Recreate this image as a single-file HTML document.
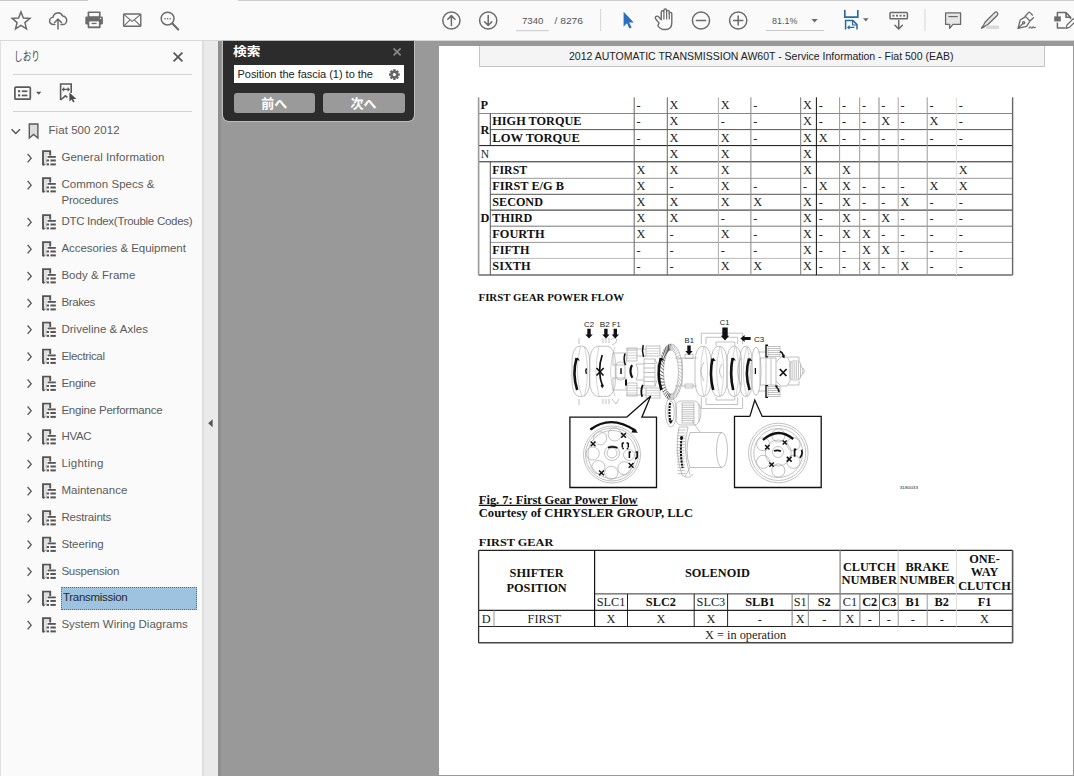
<!DOCTYPE html>
<html lang="ja"><head><meta charset="utf-8"><title>Fiat 500 2012 - AW60T</title>
<style>
html,body{margin:0;padding:0}
body{width:1074px;height:776px;position:relative;overflow:hidden;background:#999;font-family:"Liberation Sans","Noto Sans CJK JP",sans-serif;color:#4b4b4b}
.abs{position:absolute}
#toolbar{left:0;top:0;width:1074px;height:40px;background:#fafafa;border-bottom:1px solid #d8d8d8}
#panel{left:0;top:41px;width:202px;height:735px;background:#fafafa;border-left:1px solid #e0e0e0;box-sizing:border-box}
#strip{left:202px;top:41px;width:16px;height:735px;background:#eaeaea}
#page{left:439px;top:46px;width:634px;height:729px;background:#fff}
.hr{position:absolute;left:12px;width:179px;height:1px;background:#d2d2d2}
.bm{position:absolute;left:60.4px;font-size:11.5px;line-height:16px;color:#5a5a5a;white-space:nowrap}
.tb{position:absolute;font-size:10px;color:#555;white-space:nowrap}
#search{left:223px;top:41px;width:191px;height:80px;background:#2c2c2c;border-radius:0 0 6px 6px;box-shadow:0 0 0 1px #bdbdbd}
.btn{position:absolute;top:52px;height:20px;background:#9a9a9a;border-radius:3px;color:#fff;font-weight:bold;font-size:13px;line-height:21px;text-align:center}
svg{position:absolute;overflow:visible}
svg text{white-space:pre}
.sb{font-family:"Liberation Serif",serif;font-weight:bold;fill:#111}
.sr{font-family:"Liberation Serif",serif;fill:#222}
</style></head><body>
<div id="toolbar" class="abs"></div>
<div class="abs" style="left:0;top:0;width:88px;height:1px;background:#c8c8c8"></div>
<div class="abs" style="left:238px;top:0;width:836px;height:1px;background:#cdcdcd"></div>
<div id="panel" class="abs">
<div class="hr" style="top:33px"></div>
<div class="hr" style="top:70px"></div>
<div class="bm" style="left:47.5px;top:81px;letter-spacing:0.06px">Fiat 500 2012</div>
<div class="bm" style="top:108.0px;letter-spacing:0.07px">General Information</div>
<div class="bm" style="top:135.0px;letter-spacing:0.03px">Common Specs &amp;</div>
<div class="bm" style="top:151.0px;letter-spacing:-0.18px">Procedures</div>
<div class="bm" style="top:172.0px;letter-spacing:-0.28px">DTC Index(Trouble Codes)</div>
<div class="bm" style="top:199.0px;letter-spacing:-0.04px">Accesories &amp; Equipment</div>
<div class="bm" style="top:226.0px;letter-spacing:0.04px">Body &amp; Frame</div>
<div class="bm" style="top:253.0px;letter-spacing:-0.37px">Brakes</div>
<div class="bm" style="top:279.5px;letter-spacing:0.02px">Driveline &amp; Axles</div>
<div class="bm" style="top:306.5px;letter-spacing:-0.34px">Electrical</div>
<div class="bm" style="top:333.5px;letter-spacing:-0.25px">Engine</div>
<div class="bm" style="top:360.5px;letter-spacing:-0.21px">Engine Performance</div>
<div class="bm" style="top:387.0px;letter-spacing:-0.27px">HVAC</div>
<div class="bm" style="top:414.0px;letter-spacing:0.24px">Lighting</div>
<div class="bm" style="top:441.0px;letter-spacing:0.01px">Maintenance</div>
<div class="bm" style="top:468.0px;letter-spacing:-0.20px">Restraints</div>
<div class="bm" style="top:494.5px;letter-spacing:-0.08px">Steering</div>
<div class="bm" style="top:521.5px;letter-spacing:-0.24px">Suspension</div>
<div class="abs" style="left:59.6px;top:546.0px;width:136px;height:23px;background:#9dc3e0;outline:1px dotted #666;outline-offset:-1px"></div>
<div class="bm" style="left:62px;top:547.5px;letter-spacing:-0.29px;color:#2a2a2a">Transmission</div>
<div class="bm" style="top:575.0px;letter-spacing:-0.01px">System Wiring Diagrams</div>
</div>
<div id="strip" class="abs"></div>
<div class="abs" style="left:202px;top:41px;width:2px;height:735px;background:#dedede"></div>
<div class="abs" style="left:218px;top:41px;width:3px;height:735px;background:#8f8f8f"></div>
<div id="page" class="abs"></div>
<div class="abs" style="left:478.5px;top:46px;width:566px;height:21px;background:#f4f4f4;border:1px solid #c4c4c4;border-top:none;box-sizing:border-box"></div>
<svg width="1074" height="776" style="left:0;top:0">
<text x="569" y="60.1" font-family="Liberation Sans,sans-serif" font-size="10.4" fill="#222" textLength="384.5" lengthAdjust="spacingAndGlyphs">2012 AUTOMATIC TRANSMISSION AW60T - Service Information - Fiat 500 (EAB)</text>
<line x1="478.6" y1="113.5" x2="1012.6" y2="113.5" stroke="#888" stroke-width="1.00"/>
<line x1="490.3" y1="129.6" x2="1012.6" y2="129.6" stroke="#555" stroke-width="1.00"/>
<line x1="478.6" y1="145.6" x2="1012.6" y2="145.6" stroke="#111" stroke-width="1.00"/>
<line x1="478.6" y1="161.8" x2="1012.6" y2="161.8" stroke="#222" stroke-width="1.00"/>
<line x1="490.3" y1="178.3" x2="1012.6" y2="178.3" stroke="#999" stroke-width="1.00"/>
<line x1="490.3" y1="194.3" x2="1012.6" y2="194.3" stroke="#555" stroke-width="1.00"/>
<line x1="490.3" y1="210.1" x2="1012.6" y2="210.1" stroke="#222" stroke-width="1.00"/>
<line x1="490.3" y1="226.2" x2="1012.6" y2="226.2" stroke="#777" stroke-width="1.00"/>
<line x1="490.3" y1="242.4" x2="1012.6" y2="242.4" stroke="#999" stroke-width="1.00"/>
<line x1="490.3" y1="258.4" x2="1012.6" y2="258.4" stroke="#bbb" stroke-width="1.00"/>
<line x1="478.6" y1="275.0" x2="1012.6" y2="275.0" stroke="#222" stroke-width="1.00"/>
<line x1="478.6" y1="97.3" x2="478.6" y2="275.0" stroke="#999" stroke-width="1.60"/>
<line x1="490.3" y1="113.5" x2="490.3" y2="145.6" stroke="#333" stroke-width="1.00"/>
<line x1="490.3" y1="161.8" x2="490.3" y2="275.0" stroke="#555" stroke-width="1.00"/>
<line x1="634.2" y1="97.3" x2="634.2" y2="275.0" stroke="#666" stroke-width="1.00"/>
<line x1="667.3" y1="97.3" x2="667.3" y2="275.0" stroke="#666" stroke-width="1.00"/>
<line x1="718.4" y1="97.3" x2="718.4" y2="275.0" stroke="#aaa" stroke-width="1.00"/>
<line x1="750.9" y1="97.3" x2="750.9" y2="275.0" stroke="#888" stroke-width="1.00"/>
<line x1="800.7" y1="97.3" x2="800.7" y2="275.0" stroke="#777" stroke-width="1.00"/>
<line x1="816.4" y1="97.3" x2="816.4" y2="275.0" stroke="#111" stroke-width="1.00"/>
<line x1="839.6" y1="97.3" x2="839.6" y2="275.0" stroke="#999" stroke-width="1.00"/>
<line x1="859.7" y1="97.3" x2="859.7" y2="275.0" stroke="#999" stroke-width="1.00"/>
<line x1="879.0" y1="97.3" x2="879.0" y2="275.0" stroke="#888" stroke-width="1.00"/>
<line x1="898.2" y1="97.3" x2="898.2" y2="275.0" stroke="#aaa" stroke-width="1.00"/>
<line x1="927.2" y1="97.3" x2="927.2" y2="275.0" stroke="#999" stroke-width="1.00"/>
<line x1="956.4" y1="97.3" x2="956.4" y2="275.0" stroke="#ddd" stroke-width="1.00"/>
<line x1="1012.6" y1="97.3" x2="1012.6" y2="275.0" stroke="#666" stroke-width="1.40"/>
<text class="sb" x="480.5" y="109.2" font-size="12.3">P</text>
<text class="sb" x="480.4" y="133.8" font-size="12.3">R</text>
<text class="sr" x="480.8" y="157.5" font-size="11.6">N</text>
<text class="sb" x="480.6" y="222.0" font-size="12.3">D</text>
<text class="sb" x="492.3" y="125.4" font-size="12.3" textLength="89.2" lengthAdjust="spacingAndGlyphs">HIGH TORQUE</text>
<text class="sb" x="492.3" y="141.5" font-size="12.3" textLength="87.5" lengthAdjust="spacingAndGlyphs">LOW TORQUE</text>
<text class="sb" x="492.3" y="173.7" font-size="12.3" textLength="34.8" lengthAdjust="spacingAndGlyphs">FIRST</text>
<text class="sb" x="492.3" y="190.2" font-size="12.3" textLength="71.6" lengthAdjust="spacingAndGlyphs">FIRST E/G B</text>
<text class="sb" x="492.3" y="206.2" font-size="12.3" textLength="50.6" lengthAdjust="spacingAndGlyphs">SECOND</text>
<text class="sb" x="492.3" y="222.0" font-size="12.3" textLength="39.9" lengthAdjust="spacingAndGlyphs">THIRD</text>
<text class="sb" x="492.3" y="238.1" font-size="12.3" textLength="52.3" lengthAdjust="spacingAndGlyphs">FOURTH</text>
<text class="sb" x="492.3" y="254.3" font-size="12.3" textLength="37.1" lengthAdjust="spacingAndGlyphs">FIFTH</text>
<text class="sb" x="492.3" y="270.3" font-size="12.3" textLength="38.3" lengthAdjust="spacingAndGlyphs">SIXTH</text>
<text class="sr" x="636.5" y="109.2" font-size="12.3">-</text>
<text class="sr" x="669.6" y="109.2" font-size="12.3">X</text>
<text class="sr" x="720.7" y="109.2" font-size="12.3">X</text>
<text class="sr" x="753.2" y="109.2" font-size="12.3">-</text>
<text class="sr" x="803.0" y="109.2" font-size="12.3">X</text>
<text class="sr" x="818.7" y="109.2" font-size="12.3">-</text>
<text class="sr" x="841.9" y="109.2" font-size="12.3">-</text>
<text class="sr" x="862.0" y="109.2" font-size="12.3">-</text>
<text class="sr" x="881.3" y="109.2" font-size="12.3">-</text>
<text class="sr" x="900.5" y="109.2" font-size="12.3">-</text>
<text class="sr" x="929.5" y="109.2" font-size="12.3">-</text>
<text class="sr" x="958.7" y="109.2" font-size="12.3">-</text>
<text class="sr" x="636.5" y="125.4" font-size="12.3">-</text>
<text class="sr" x="669.6" y="125.4" font-size="12.3">X</text>
<text class="sr" x="720.7" y="125.4" font-size="12.3">-</text>
<text class="sr" x="753.2" y="125.4" font-size="12.3">-</text>
<text class="sr" x="803.0" y="125.4" font-size="12.3">X</text>
<text class="sr" x="818.7" y="125.4" font-size="12.3">-</text>
<text class="sr" x="841.9" y="125.4" font-size="12.3">-</text>
<text class="sr" x="862.0" y="125.4" font-size="12.3">-</text>
<text class="sr" x="881.3" y="125.4" font-size="12.3">X</text>
<text class="sr" x="900.5" y="125.4" font-size="12.3">-</text>
<text class="sr" x="929.5" y="125.4" font-size="12.3">X</text>
<text class="sr" x="958.7" y="125.4" font-size="12.3">-</text>
<text class="sr" x="636.5" y="141.5" font-size="12.3">-</text>
<text class="sr" x="669.6" y="141.5" font-size="12.3">X</text>
<text class="sr" x="720.7" y="141.5" font-size="12.3">X</text>
<text class="sr" x="753.2" y="141.5" font-size="12.3">-</text>
<text class="sr" x="803.0" y="141.5" font-size="12.3">X</text>
<text class="sr" x="818.7" y="141.5" font-size="12.3">X</text>
<text class="sr" x="841.9" y="141.5" font-size="12.3">-</text>
<text class="sr" x="862.0" y="141.5" font-size="12.3">-</text>
<text class="sr" x="881.3" y="141.5" font-size="12.3">-</text>
<text class="sr" x="900.5" y="141.5" font-size="12.3">-</text>
<text class="sr" x="929.5" y="141.5" font-size="12.3">-</text>
<text class="sr" x="958.7" y="141.5" font-size="12.3">-</text>
<text class="sr" x="669.6" y="157.5" font-size="12.3">X</text>
<text class="sr" x="720.7" y="157.5" font-size="12.3">X</text>
<text class="sr" x="803.0" y="157.5" font-size="12.3">X</text>
<text class="sr" x="636.5" y="173.7" font-size="12.3">X</text>
<text class="sr" x="669.6" y="173.7" font-size="12.3">X</text>
<text class="sr" x="720.7" y="173.7" font-size="12.3">X</text>
<text class="sr" x="803.0" y="173.7" font-size="12.3">X</text>
<text class="sr" x="841.9" y="173.7" font-size="12.3">X</text>
<text class="sr" x="958.7" y="173.7" font-size="12.3">X</text>
<text class="sr" x="636.5" y="190.2" font-size="12.3">X</text>
<text class="sr" x="669.6" y="190.2" font-size="12.3">-</text>
<text class="sr" x="720.7" y="190.2" font-size="12.3">X</text>
<text class="sr" x="753.2" y="190.2" font-size="12.3">-</text>
<text class="sr" x="803.0" y="190.2" font-size="12.3">-</text>
<text class="sr" x="818.7" y="190.2" font-size="12.3">X</text>
<text class="sr" x="841.9" y="190.2" font-size="12.3">X</text>
<text class="sr" x="862.0" y="190.2" font-size="12.3">-</text>
<text class="sr" x="881.3" y="190.2" font-size="12.3">-</text>
<text class="sr" x="900.5" y="190.2" font-size="12.3">-</text>
<text class="sr" x="929.5" y="190.2" font-size="12.3">X</text>
<text class="sr" x="958.7" y="190.2" font-size="12.3">X</text>
<text class="sr" x="636.5" y="206.2" font-size="12.3">X</text>
<text class="sr" x="669.6" y="206.2" font-size="12.3">X</text>
<text class="sr" x="720.7" y="206.2" font-size="12.3">X</text>
<text class="sr" x="753.2" y="206.2" font-size="12.3">X</text>
<text class="sr" x="803.0" y="206.2" font-size="12.3">X</text>
<text class="sr" x="818.7" y="206.2" font-size="12.3">-</text>
<text class="sr" x="841.9" y="206.2" font-size="12.3">X</text>
<text class="sr" x="862.0" y="206.2" font-size="12.3">-</text>
<text class="sr" x="881.3" y="206.2" font-size="12.3">-</text>
<text class="sr" x="900.5" y="206.2" font-size="12.3">X</text>
<text class="sr" x="929.5" y="206.2" font-size="12.3">-</text>
<text class="sr" x="958.7" y="206.2" font-size="12.3">-</text>
<text class="sr" x="636.5" y="222.0" font-size="12.3">X</text>
<text class="sr" x="669.6" y="222.0" font-size="12.3">X</text>
<text class="sr" x="720.7" y="222.0" font-size="12.3">-</text>
<text class="sr" x="753.2" y="222.0" font-size="12.3">-</text>
<text class="sr" x="803.0" y="222.0" font-size="12.3">X</text>
<text class="sr" x="818.7" y="222.0" font-size="12.3">-</text>
<text class="sr" x="841.9" y="222.0" font-size="12.3">X</text>
<text class="sr" x="862.0" y="222.0" font-size="12.3">-</text>
<text class="sr" x="881.3" y="222.0" font-size="12.3">X</text>
<text class="sr" x="900.5" y="222.0" font-size="12.3">-</text>
<text class="sr" x="929.5" y="222.0" font-size="12.3">-</text>
<text class="sr" x="958.7" y="222.0" font-size="12.3">-</text>
<text class="sr" x="636.5" y="238.1" font-size="12.3">X</text>
<text class="sr" x="669.6" y="238.1" font-size="12.3">-</text>
<text class="sr" x="720.7" y="238.1" font-size="12.3">X</text>
<text class="sr" x="753.2" y="238.1" font-size="12.3">-</text>
<text class="sr" x="803.0" y="238.1" font-size="12.3">X</text>
<text class="sr" x="818.7" y="238.1" font-size="12.3">-</text>
<text class="sr" x="841.9" y="238.1" font-size="12.3">X</text>
<text class="sr" x="862.0" y="238.1" font-size="12.3">X</text>
<text class="sr" x="881.3" y="238.1" font-size="12.3">-</text>
<text class="sr" x="900.5" y="238.1" font-size="12.3">-</text>
<text class="sr" x="929.5" y="238.1" font-size="12.3">-</text>
<text class="sr" x="958.7" y="238.1" font-size="12.3">-</text>
<text class="sr" x="636.5" y="254.3" font-size="12.3">-</text>
<text class="sr" x="669.6" y="254.3" font-size="12.3">-</text>
<text class="sr" x="720.7" y="254.3" font-size="12.3">-</text>
<text class="sr" x="753.2" y="254.3" font-size="12.3">-</text>
<text class="sr" x="803.0" y="254.3" font-size="12.3">X</text>
<text class="sr" x="818.7" y="254.3" font-size="12.3">-</text>
<text class="sr" x="841.9" y="254.3" font-size="12.3">-</text>
<text class="sr" x="862.0" y="254.3" font-size="12.3">X</text>
<text class="sr" x="881.3" y="254.3" font-size="12.3">X</text>
<text class="sr" x="900.5" y="254.3" font-size="12.3">-</text>
<text class="sr" x="929.5" y="254.3" font-size="12.3">-</text>
<text class="sr" x="958.7" y="254.3" font-size="12.3">-</text>
<text class="sr" x="636.5" y="270.3" font-size="12.3">-</text>
<text class="sr" x="669.6" y="270.3" font-size="12.3">-</text>
<text class="sr" x="720.7" y="270.3" font-size="12.3">X</text>
<text class="sr" x="753.2" y="270.3" font-size="12.3">X</text>
<text class="sr" x="803.0" y="270.3" font-size="12.3">X</text>
<text class="sr" x="818.7" y="270.3" font-size="12.3">-</text>
<text class="sr" x="841.9" y="270.3" font-size="12.3">-</text>
<text class="sr" x="862.0" y="270.3" font-size="12.3">X</text>
<text class="sr" x="881.3" y="270.3" font-size="12.3">-</text>
<text class="sr" x="900.5" y="270.3" font-size="12.3">X</text>
<text class="sr" x="929.5" y="270.3" font-size="12.3">-</text>
<text class="sr" x="958.7" y="270.3" font-size="12.3">-</text>
<text class="sb" x="478.5" y="300.8" font-size="10.9" textLength="145.7" lengthAdjust="spacingAndGlyphs">FIRST GEAR POWER FLOW</text>
<text class="sb" x="478.8" y="504.0" font-size="12.3" textLength="158.8" lengthAdjust="spacingAndGlyphs">Fig. 7: First Gear Power Flow</text>
<line x1="478.8" y1="505.4" x2="637.6" y2="505.4" stroke="#111" stroke-width="1.10"/>
<text class="sb" x="478.8" y="517.2" font-size="12.3" textLength="214.2" lengthAdjust="spacingAndGlyphs">Courtesy of CHRYSLER GROUP, LLC</text>
<text class="sb" x="478.8" y="545.9" font-size="10.9" textLength="74.5" lengthAdjust="spacingAndGlyphs">FIRST GEAR</text>
<g fill="none" stroke="#a8a8a8" stroke-width="0.7">
<rect x="572" y="346.2" width="17.7" height="50.2" rx="7" ry="15"/>
<path d="M580.5,346.4 q-7,25 1.2,50 M584.5,346.4 q6,25 0,50" stroke-width="0.5"/>
<rect x="589.7" y="346.2" width="25.6" height="50.2" rx="8" ry="15"/>
<path d="M615,346.6 q-9,25 0,49.6 M599,346.4 q-6,25 0,50" stroke-width="0.5"/>
<path d="M579,338 v6 M603,338 v5 M606,338 v5 M609,338 v5 M611,340 q4,-4 6,0 q-1,4 -5,5 M579,399 v6 M603,399 v5 M606,399 v5 M609,399 v5 M612,399 l4,5 l3,-5"/>
<rect x="613" y="353" width="13" height="12"/><rect x="613" y="378" width="13" height="12"/>
<rect x="616" y="362" width="9" height="18" rx="4"/>
<rect x="627" y="348" width="10" height="13"/>
<path d="M627,350.5 h10" stroke-width="0.5"/>
<path d="M627,353 h10" stroke-width="0.5"/>
<path d="M627,355.5 h10" stroke-width="0.5"/>
<path d="M627,358 h10" stroke-width="0.5"/>
<rect x="627" y="383" width="10" height="13"/>
<path d="M627,385.5 h10" stroke-width="0.5"/>
<path d="M627,388 h10" stroke-width="0.5"/>
<path d="M627,390.5 h10" stroke-width="0.5"/>
<path d="M627,393 h10" stroke-width="0.5"/>
<rect x="646" y="346" width="14" height="10"/>
<path d="M646,348.5 h14" stroke-width="0.5"/>
<path d="M646,351 h14" stroke-width="0.5"/>
<path d="M646,353.5 h14" stroke-width="0.5"/>
<rect x="646" y="388" width="14" height="10"/>
<path d="M646,390.5 h14" stroke-width="0.5"/>
<path d="M646,393 h14" stroke-width="0.5"/>
<path d="M646,395.5 h14" stroke-width="0.5"/>
<rect x="644" y="359" width="11" height="27"/>
<path d="M644,363.5 h11"/>
<path d="M644,368 h11"/>
<path d="M644,372.5 h11"/>
<path d="M644,377 h11"/>
<path d="M644,381.5 h11"/>
<path d="M655,359 q7,12 0,27 M636,364 h8 M636,380 h8 M636,364 q4,8 0,16"/>
<path d="M626,349 h20 M626,395 h20 M637,356 h9 M637,388 h9"/>
<ellipse cx="671" cy="372" rx="11.5" ry="28"/>
<ellipse cx="671" cy="372" rx="7.5" ry="22"/>
<path d="M670.3,393.9 L668.6,399.4" stroke="#4a4a4a" stroke-width="0.9"/>
<path d="M669.3,393.4 L667.1,398.3" stroke="#4a4a4a" stroke-width="0.9"/>
<path d="M668.3,392.5 L665.6,396.7" stroke="#4a4a4a" stroke-width="0.9"/>
<path d="M667.3,391.1 L664.2,394.5" stroke="#4a4a4a" stroke-width="0.9"/>
<path d="M666.4,389.4 L662.9,391.9" stroke="#4a4a4a" stroke-width="0.9"/>
<path d="M665.6,387.3 L661.8,388.9" stroke="#4a4a4a" stroke-width="0.9"/>
<path d="M664.9,384.9 L660.9,385.5" stroke="#4a4a4a" stroke-width="0.9"/>
<path d="M664.4,382.2 L660.2,381.9" stroke="#4a4a4a" stroke-width="0.9"/>
<path d="M663.9,379.3 L659.8,378.1" stroke="#4a4a4a" stroke-width="0.9"/>
<path d="M663.6,376.3 L659.5,374.1" stroke="#4a4a4a" stroke-width="0.9"/>
<path d="M663.5,373.2 L659.5,370.1" stroke="#4a4a4a" stroke-width="0.9"/>
<path d="M663.5,370.0 L659.8,366.1" stroke="#4a4a4a" stroke-width="0.9"/>
<path d="M663.7,366.9 L660.2,362.3" stroke="#4a4a4a" stroke-width="0.9"/>
<path d="M664.0,363.9 L660.9,358.7" stroke="#4a4a4a" stroke-width="0.9"/>
<path d="M664.5,361.1 L661.8,355.3" stroke="#4a4a4a" stroke-width="0.9"/>
<path d="M665.1,358.5 L662.9,352.2" stroke="#4a4a4a" stroke-width="0.9"/>
<path d="M665.8,356.1 L664.1,349.6" stroke="#4a4a4a" stroke-width="0.9"/>
<path d="M666.6,354.1 L665.5,347.4" stroke="#4a4a4a" stroke-width="0.9"/>
<path d="M667.5,352.5 L667.0,345.8" stroke="#4a4a4a" stroke-width="0.9"/>
<path d="M668.5,351.2 L668.5,344.6" stroke="#4a4a4a" stroke-width="0.9"/>
<path d="M669.6,350.4 L670.2,344.1" stroke="#4a4a4a" stroke-width="0.9"/>
<path d="M670.6,350.0 L671.8,344.1"/>
<path d="M671.7,350.1 L673.4,344.6"/>
<path d="M672.8,350.6 L675.0,345.8"/>
<path d="M673.8,351.6 L676.5,347.4"/>
<path d="M674.8,352.9 L677.9,349.6"/>
<path d="M675.6,354.7 L679.1,352.2"/>
<path d="M676.4,356.8 L680.2,355.3"/>
<path d="M677.1,359.3 L681.1,358.6"/>
<path d="M677.7,361.9 L681.8,362.3"/>
<path d="M678.1,364.8 L682.2,366.1"/>
<path d="M678.4,367.9 L682.5,370.1"/>
<path d="M678.5,371.0 L682.5,374.1"/>
<path d="M678.5,374.1 L682.2,378.0"/>
<path d="M678.3,377.2 L681.8,381.9"/>
<path d="M678.0,380.2 L681.1,385.5"/>
<path d="M677.5,383.1 L680.2,388.9"/>
<path d="M676.9,385.7 L679.1,391.9"/>
<path d="M676.2,388.0 L677.8,394.5"/>
<path d="M675.3,390.0 L676.5,396.6"/>
<path d="M674.4,391.6 L675.0,398.3"/>
<path d="M673.4,392.8 L673.4,399.4"/>
<path d="M672.4,393.6 L671.7,399.9"/>
<path d="M671.3,394.0 L670.1,399.9"/>
<path d="M675,358 H697 M675,386 H697 M682,358 v28"/>
<rect x="685" y="354.5" width="8" height="4"/><rect x="685" y="384" width="8" height="4"/>
<rect x="695.0" y="346.4" width="16.0" height="50" rx="7.0" ry="15"/>
<path d="M703.8,346.6 q-6.5,25 0,49.6" stroke-width="0.5"/>
<path d="M704.9,347 q5.5,24 0,49" stroke-width="0.5"/>
<rect x="711.0" y="346.4" width="16.0" height="50" rx="7.0" ry="15"/>
<path d="M719.8,346.6 q-6.5,25 0,49.6" stroke-width="0.5"/>
<path d="M720.9,347 q5.5,24 0,49" stroke-width="0.5"/>
<rect x="727.0" y="346.4" width="14.5" height="50" rx="6.3" ry="15"/>
<path d="M735.0,346.6 q-6.5,25 0,49.6" stroke-width="0.5"/>
<path d="M736.0,347 q5.5,24 0,49" stroke-width="0.5"/>
<rect x="739.6" y="346.4" width="12.6" height="50" rx="5.5" ry="15"/>
<path d="M746.5,346.6 q-6.5,25 0,49.6" stroke-width="0.5"/>
<path d="M747.4,347 q5.5,24 0,49" stroke-width="0.5"/>
<path d="M704,362 q-6,9 0,19 M722,364 q-5,7 0,14 M741,358 q-7,13 0,27"/>
<path d="M701.3,344 V333.2 H742.6 V344 M706,344 V337.3 H737.7 V344 M716,346 V342 H734.8 V346"/>
<path d="M701.3,397.5 V408.5 H742.6 V397.5 M706,397.5 V404.5 H737.7 V397.5 M716,397 V400 H734.8 V397"/>
<ellipse cx="756" cy="371.2" rx="5" ry="24"/>
<path d="M758,352 h8 M758,391 h8 M760,358 h16 v27 h-16 z M766,358 v27 M771,358 v27"/>
<rect x="768" y="346.5" width="12" height="10"/>
<path d="M768,348.5 h12"/>
<path d="M768,350.5 h12"/>
<path d="M768,352.5 h12"/>
<path d="M768,354.5 h12"/>
<rect x="768" y="386.5" width="12" height="10"/>
<path d="M768,388.5 h12"/>
<path d="M768,390.5 h12"/>
<path d="M768,392.5 h12"/>
<path d="M768,394.5 h12"/>
<path d="M776,362 l5,-5 h6 l3,5 v19 l-3,5 h-6 l-5,-5"/>
<rect x="790" y="361" width="10.5" height="19" rx="3"/>
<path d="M792.1,362 v17"/>
<path d="M794.2,362 v17"/>
<path d="M796.3,362 v17"/>
<path d="M798.4,362 v17"/>
<path d="M788,357 h11 v4 M788,385 h11 v-4 M800.5,365 q5,6 0,12 M803,368 q3,3 0,6"/>
<ellipse cx="671" cy="412" rx="5.5" ry="15"/>
<ellipse cx="671" cy="412" rx="3.2" ry="11"/>
<rect x="676" y="401" width="23" height="24" rx="5"/>
<rect x="682" y="403" width="12" height="20"/>
<path d="M682,405.2 h12"/>
<path d="M682,407.4 h12"/>
<path d="M682,409.6 h12"/>
<path d="M682,411.8 h12"/>
<path d="M682,414 h12"/>
<path d="M682,416.2 h12"/>
<path d="M682,418.4 h12"/>
<path d="M682,420.6 h12"/>
<path d="M699,404 q4,8 0,18"/>
<path d="M679,427 q-5,24 3,48 l4,2 q5,1 7,-3 M679,427 h9 q-6,22 2,48"/>
<path d="M677.74,430 h8"/>
<path d="M677.56,432.9 h8"/>
<path d="M677.38,435.8 h8"/>
<path d="M677.2,438.7 h8"/>
<path d="M677.02,441.6 h8"/>
<path d="M676.84,444.5 h8"/>
<path d="M676.66,447.4 h8"/>
<path d="M676.48,450.3 h8"/>
<path d="M676.3,453.2 h8"/>
<path d="M676.48,456.1 h8"/>
<path d="M676.66,459 h8"/>
<path d="M676.84,461.9 h8"/>
<path d="M677.02,464.8 h8"/>
<path d="M677.2,467.7 h8"/>
<path d="M677.38,470.6 h8"/>
<path d="M677.56,473.5 h8"/>
<path d="M690,432.5 H722 M690,467.5 H722 M690,432.5 q-6,18 0,35"/>
<ellipse cx="722" cy="450" rx="5.5" ry="17.5"/>
<path d="M692,421 l8,11 M690,467.5 l-5,9"/>
</g>
<g fill="none" stroke="#111" stroke-width="1.3" stroke-linejoin="miter">
<path d="M626.6,417.2 H569.9 V487.5 H656.5 V417.2 H641.9 L650.7,396 L626.6,417.2"/>
<path d="M749.9,416.4 H734.5 V487.5 H821.2 V416.4 H762.2 L754.8,400 L749.9,416.4"/>
</g>
<g fill="none" stroke="#a8a8a8" stroke-width="0.7">
<circle cx="612" cy="454.5" r="28.5"/><circle cx="612" cy="454.5" r="26.5"/><circle cx="612" cy="454.5" r="24"/>
<circle cx="592.7" cy="453.5" r="6.6"/>
<circle cx="600.1" cy="438.3" r="6.6"/>
<circle cx="614.7" cy="434.4" r="6.6"/>
<circle cx="624.4" cy="468.3" r="6.6"/>
<circle cx="611.3" cy="472.8" r="6.6"/>
<circle cx="598.4" cy="467.1" r="6.6"/>
<circle cx="612" cy="453" r="7.5"/><circle cx="612" cy="453" r="5"/><circle cx="629" cy="455" r="5.5"/>
<circle cx="778.3" cy="453" r="29.8"/><circle cx="778.3" cy="453" r="27.5"/><circle cx="778.3" cy="453" r="24.5"/><circle cx="778.3" cy="453" r="13"/>
<circle cx="793.5" cy="461.8" r="6.6"/>
<circle cx="778.3" cy="470.5" r="6.6"/>
<circle cx="763.1" cy="461.8" r="6.6"/>
<circle cx="763.1" cy="444.2" r="6.6"/>
<circle cx="778.3" cy="435.5" r="6.6"/>
<circle cx="793.5" cy="444.2" r="6.6"/>
<circle cx="778" cy="452" r="5.5"/>
</g>
<g fill="none" stroke="#111" stroke-width="2" stroke-linecap="butt">
<path d="M576.6,358.0 Q572.0,374.0 577.2,390.0" stroke-width="2.6"/>
<path d="M575.0,360.0 l2.6,-2.6 l2.2,3 z" fill="#111" stroke="none"/>
<path d="M602.2,355.0 Q596.7,371.0 602.8,387.0" stroke-width="1.7"/>
<path d="M600.5,385 l1.8,3.5 l1.6,-3.8 z" fill="#111" stroke="none"/>
<path d="M596.5,368 l7,7.5 M603.7,368 l-7.2,7.5" stroke-width="1.6"/>
<path d="M586.5,368.3 q-1.6,2.8 0,5.5" stroke-width="1.4"/>
<path d="M625,353.5 q-2,6 0.4,11.5" stroke-width="1.5"/>
<path d="M621,368.3 v5.6" stroke-width="1.5"/>
<path d="M632,365 q-3.4,6.5 0.4,12.8" stroke-width="2.2"/>
<path d="M626,379.6 v6" stroke-width="2"/>
<path d="M643.2,345 q-1.6,6 0.4,12" stroke-width="1.5"/>
<path d="M642.8,384.8 q-2.6,6 -0.6,12" stroke-width="1.8"/>
<path d="M660.8,358.0 Q656.2,374.0 661.4,390.0" stroke-width="2.6"/>
<path d="M659.2,360.0 l2.6,-2.6 l2.2,3 z" fill="#111" stroke="none"/>
<path d="M712.6,358.5 Q709.0,374.2 713.2,390.0" stroke-width="2.6"/>
<path d="M711.0,360.5 l2.6,-2.6 l2.2,3 z" fill="#111" stroke="none"/>
<path d="M732.6,358.0 Q729.4,374.0 733.2,390.0" stroke-width="2.6"/>
<path d="M731.0,360.0 l2.6,-2.6 l2.2,3 z" fill="#111" stroke="none"/>
<path d="M749.0,358.5 Q744.4,374.2 749.6,390.0" stroke-width="2.6"/>
<path d="M747.4,360.5 l2.6,-2.6 l2.2,3 z" fill="#111" stroke="none"/>
<path d="M755.4,368 v6" stroke-width="1.3"/>
<path d="M768,345.3 h-2 v11.6 h2 M768,385.6 h-2 v11.8 h2" stroke-width="1.4"/>
<path d="M780,351.5 q3,1 3.2,4.5" stroke-width="1.6"/><path d="M781.6,356.8 l3.2,-2.2 l-0.3,3.6 z" fill="#111" stroke="none"/>
<path d="M779,392 q-0.5,-3.5 -2.6,-5" stroke-width="1.5"/><path d="M775,385.2 l3.2,0.4 l-2.2,2.6 z" fill="#111" stroke="none"/>
<path d="M779.8,369 l6.6,7 M786.6,369 l-6.8,7" stroke-width="1.7"/>
<path d="M670.2,403 q-1.6,10 0.4,19" stroke-width="2" stroke-dasharray="2 1"/>
<path d="M668.4,420.5 l2.4,3.6 l2,-3.8 z" fill="#111" stroke="none"/>
<path d="M681.6,438 q-1.8,15 1,30" stroke-width="2" stroke-dasharray="2.2 1"/>
<circle cx="681.6" cy="437.5" r="1.6" fill="#111" stroke="none"/>
<path d="M590.5,429.5 Q611,414 636,431" stroke-width="2.3"/>
<path d="M633.5,427.8 l4.4,5 l-6.4,-0.4 z" fill="#111" stroke="none"/>
<path d="M589.5,430.3 l2.6,-3.6 l1.2,2.2 z" fill="#111" stroke="none"/>
<path d="M621.2,433.0 l4.8,4.8 M626.0,433.0 l-4.8,4.8" stroke-width="1.4"/>
<path d="M590.7,441.4 l4.8,4.8 M595.5,441.4 l-4.8,4.8" stroke-width="1.4"/>
<path d="M628.7,462.9 l4.8,4.8 M633.5,462.9 l-4.8,4.8" stroke-width="1.4"/>
<path d="M599.1,470.4 l4.8,4.8 M603.9,470.4 l-4.8,4.8" stroke-width="1.4"/>
<path d="M608,447.6 q4.6,-1.6 9.5,0.2" stroke-width="1.8"/>
<path d="M622.3,443 h1.8 M626.5,443 h1.8 M622.3,443 v4.6 M628.3,443 v4.6 M622.3,448.4 h1.6 M626.7,448.4 h1.6" stroke-width="1.5"/>
<path d="M631,452 h-1.6 v6 M635.6,452 h1.6 v5 q-0.4,1.6 -2.2,1.6" stroke-width="1.6"/>
<path d="M763,440 Q777.8,426.5 793.2,439" stroke-width="2.3"/>
<path d="M765.1,445.0 l4.4,4.4 M769.5,445.0 l-4.4,4.4" stroke-width="1.4"/>
<path d="M782.7,440.4 l4.0,4.0 M786.7,440.4 l-4.0,4.0" stroke-width="1.4"/>
<path d="M786.8,456.8 l4.8,4.8 M791.6,456.8 l-4.8,4.8" stroke-width="1.6"/>
<path d="M769.4,462.4 l4.4,4.4 M773.8,462.4 l-4.4,4.4" stroke-width="1.4"/>
<path d="M774,451 q3.6,-1.4 7,0.2" stroke-width="1.7"/>
<path d="M796.4,449.4 h-1.8 v7.4 M801.6,449.8 q1.6,4.6 -1.8,8" stroke-width="1.7"/>
</g>
<g fill="#111" stroke="none">
<path d="M587.3,328.7 h3.4 v5.7 h2.0 l-3.7,4.2 l-3.7,-4.2 h2.0 z"/>
<path d="M604.2,328.7 h3.4 v5.7 h2.0 l-3.7,4.2 l-3.7,-4.2 h2.0 z"/>
<path d="M613.6,328.7 h3.4 v5.7 h2.0 l-3.7,4.2 l-3.7,-4.2 h2.0 z"/>
<path d="M687.3,345.4 h3.4 v5.6 h2.0 l-3.7,4.2 l-3.7,-4.2 h2.0 z"/>
<path d="M722.3,327.4 h5.4 v8.4 h1.5 l-4.2,4.6 l-4.2,-4.6 h1.5 z"/>
<path d="M750.6,336.9 v3 h-6 v2 l-4.2,-3.5 l4.2,-3.5 v2 z"/>
</g>
<g font-family="Liberation Sans,sans-serif" font-size="7.6" fill="#222">
<text x="584" y="326.9" textLength="10" lengthAdjust="spacingAndGlyphs">C2</text><text x="599.8" y="326.9" textLength="10" lengthAdjust="spacingAndGlyphs">B2</text><text x="612" y="326.9" textLength="8.6" lengthAdjust="spacingAndGlyphs">F1</text>
<text x="684.6" y="342.6" textLength="9.4" lengthAdjust="spacingAndGlyphs">B1</text><text x="719.8" y="325" textLength="9.6" lengthAdjust="spacingAndGlyphs">C1</text><text x="754" y="341.6" textLength="10.4" lengthAdjust="spacingAndGlyphs">C3</text>
<text x="899.7" y="488.6" font-size="4.4" textLength="18.4" lengthAdjust="spacingAndGlyphs">3180033</text>
</g>
<line x1="478.6" y1="550.3" x2="1012.6" y2="550.3" stroke="#222" stroke-width="1.30"/>
<line x1="594.6" y1="593.9" x2="1012.6" y2="593.9" stroke="#333" stroke-width="1.00"/>
<line x1="478.6" y1="610.3" x2="1012.6" y2="610.3" stroke="#222" stroke-width="1.20"/>
<line x1="478.6" y1="626.5" x2="1012.6" y2="626.5" stroke="#222" stroke-width="1.20"/>
<line x1="478.6" y1="642.8" x2="1012.6" y2="642.8" stroke="#444" stroke-width="1.60"/>
<line x1="478.6" y1="550.3" x2="478.6" y2="642.8" stroke="#333" stroke-width="1.30"/>
<line x1="1012.6" y1="550.3" x2="1012.6" y2="642.8" stroke="#555" stroke-width="1.60"/>
<line x1="494.0" y1="610.3" x2="494.0" y2="626.5" stroke="#999" stroke-width="1.00"/>
<line x1="594.6" y1="550.3" x2="594.6" y2="626.5" stroke="#111" stroke-width="1.20"/>
<line x1="627.5" y1="593.9" x2="627.5" y2="626.5" stroke="#222" stroke-width="1.00"/>
<line x1="694.2" y1="593.9" x2="694.2" y2="626.5" stroke="#222" stroke-width="1.00"/>
<line x1="727.6" y1="593.9" x2="727.6" y2="626.5" stroke="#222" stroke-width="1.00"/>
<line x1="792.1" y1="593.9" x2="792.1" y2="626.5" stroke="#777" stroke-width="1.00"/>
<line x1="808.3" y1="593.9" x2="808.3" y2="626.5" stroke="#888" stroke-width="1.00"/>
<line x1="840.1" y1="550.3" x2="840.1" y2="626.5" stroke="#888" stroke-width="1.30"/>
<line x1="859.9" y1="593.9" x2="859.9" y2="626.5" stroke="#777" stroke-width="1.00"/>
<line x1="879.5" y1="593.9" x2="879.5" y2="626.5" stroke="#777" stroke-width="1.00"/>
<line x1="898.2" y1="550.3" x2="898.2" y2="593.9" stroke="#ccc" stroke-width="1.00"/>
<line x1="898.2" y1="593.9" x2="898.2" y2="626.5" stroke="#999" stroke-width="1.00"/>
<line x1="927.2" y1="593.9" x2="927.2" y2="626.5" stroke="#999" stroke-width="1.00"/>
<line x1="956.4" y1="550.3" x2="956.4" y2="626.5" stroke="#ddd" stroke-width="1.00"/>
<text class="sb" x="536.6" y="577.0" font-size="12.3" text-anchor="middle">SHIFTER</text>
<text class="sb" x="536.6" y="591.5" font-size="12.3" text-anchor="middle">POSITION</text>
<text class="sb" x="717.4" y="576.5" font-size="12.3" text-anchor="middle">SOLENOID</text>
<text class="sb" x="869.2" y="570.5" font-size="12.3" text-anchor="middle">CLUTCH</text>
<text class="sb" x="869.2" y="583.5" font-size="12.3" textLength="55.5" lengthAdjust="spacingAndGlyphs" text-anchor="middle">NUMBER</text>
<text class="sb" x="927.3" y="570.5" font-size="12.3" text-anchor="middle">BRAKE</text>
<text class="sb" x="927.3" y="583.5" font-size="12.3" textLength="55.5" lengthAdjust="spacingAndGlyphs" text-anchor="middle">NUMBER</text>
<text class="sb" x="984.5" y="562.5" font-size="12.3" text-anchor="middle">ONE-</text>
<text class="sb" x="984.5" y="576.0" font-size="12.3" text-anchor="middle">WAY</text>
<text class="sb" x="984.5" y="589.5" font-size="12.3" text-anchor="middle">CLUTCH</text>
<text class="sr" x="611.0" y="606.3" font-size="12.3" text-anchor="middle">SLC1</text>
<text class="sr" x="611.0" y="622.7" font-size="12.3" text-anchor="middle">X</text>
<text class="sb" x="660.9" y="606.3" font-size="12.3" text-anchor="middle">SLC2</text>
<text class="sr" x="660.9" y="622.7" font-size="12.3" text-anchor="middle">X</text>
<text class="sr" x="710.9" y="606.3" font-size="12.3" text-anchor="middle">SLC3</text>
<text class="sr" x="710.9" y="622.7" font-size="12.3" text-anchor="middle">X</text>
<text class="sb" x="759.9" y="606.3" font-size="12.3" text-anchor="middle">SLB1</text>
<text class="sr" x="759.9" y="622.7" font-size="12.3" text-anchor="middle">-</text>
<text class="sr" x="800.2" y="606.3" font-size="12.3" text-anchor="middle">S1</text>
<text class="sr" x="800.2" y="622.7" font-size="12.3" text-anchor="middle">X</text>
<text class="sb" x="824.2" y="606.3" font-size="12.3" text-anchor="middle">S2</text>
<text class="sr" x="824.2" y="622.7" font-size="12.3" text-anchor="middle">-</text>
<text class="sr" x="850.0" y="606.3" font-size="12.3" text-anchor="middle">C1</text>
<text class="sr" x="850.0" y="622.7" font-size="12.3" text-anchor="middle">X</text>
<text class="sb" x="869.7" y="606.3" font-size="12.3" text-anchor="middle">C2</text>
<text class="sr" x="869.7" y="622.7" font-size="12.3" text-anchor="middle">-</text>
<text class="sb" x="888.9" y="606.3" font-size="12.3" text-anchor="middle">C3</text>
<text class="sr" x="888.9" y="622.7" font-size="12.3" text-anchor="middle">-</text>
<text class="sb" x="912.7" y="606.3" font-size="12.3" text-anchor="middle">B1</text>
<text class="sr" x="912.7" y="622.7" font-size="12.3" text-anchor="middle">-</text>
<text class="sb" x="941.8" y="606.3" font-size="12.3" text-anchor="middle">B2</text>
<text class="sr" x="941.8" y="622.7" font-size="12.3" text-anchor="middle">-</text>
<text class="sb" x="984.5" y="606.3" font-size="12.3" text-anchor="middle">F1</text>
<text class="sr" x="984.5" y="622.7" font-size="12.3" text-anchor="middle">X</text>
<text class="sr" x="486.3" y="622.7" font-size="12.3" text-anchor="middle">D</text>
<text class="sr" x="544.3" y="622.7" font-size="12.3" text-anchor="middle">FIRST</text>
<text class="sr" x="745.6" y="638.8" font-size="12.3" text-anchor="middle">X = in operation</text>
</svg>
<div id="search" class="abs">
<div class="abs" style="left:10px;top:2px;color:#fff;font-weight:bold;font-size:12.2px;line-height:18px;transform:scaleX(1.13);transform-origin:0 0">検索</div>
<div class="abs" style="left:11px;top:24px;width:170px;height:18px;background:#fff"></div>
<div class="abs" style="left:14.5px;top:24px;font-size:11px;line-height:18px;color:#222;white-space:nowrap;letter-spacing:-0.03px">Position the fascia (1) to the</div>
<div class="btn" style="left:10.5px;width:81.5px">前へ</div>
<div class="btn" style="left:99.5px;width:82px">次へ</div>
</div>
<svg width="1074" height="776" style="left:0;top:0">
<g fill="none" stroke="#6b6b6b" stroke-width="1.5" stroke-linejoin="round" stroke-linecap="round">
<polygon points="21.0,11.9 23.4,18.0 29.9,18.4 24.9,22.6 26.5,28.9 21.0,25.4 15.5,28.9 17.1,22.6 12.1,18.4 18.6,18.0" stroke-linejoin="miter"/>
<path d="M54.8,24.6 h-1.3 a3.7,3.7 0 0 1 -0.4,-7.4 a4.9,5 0 0 1 9.4,-1.2 a4,4.2 0 0 1 0.2,8.6 h-1.7"/>
<path d="M58,29 v-9.5 M54.6,22.6 l3.4,-3.6 l3.4,3.6"/>
</g>
<g fill="#6b6b6b" stroke="none">
<rect x="87.6" y="11.4" width="13" height="6" rx="0.8"/>
<rect x="89.3" y="13" width="9.6" height="3.4" fill="#fafafa"/>
<rect x="85.3" y="16.6" width="17.6" height="8" rx="1.4"/>
<rect x="87.6" y="19.8" width="13" height="8.4" rx="0.8"/>
<rect x="89.3" y="21.4" width="9.6" height="5" fill="#fafafa"/>
<rect x="91.6" y="22.8" width="5" height="1.3"/>
<circle cx="100.6" cy="18.4" r="0.7" fill="#fafafa"/>
</g>
<g fill="none" stroke="#6b6b6b" stroke-width="1.4" stroke-linejoin="round">
<rect x="123.6" y="14" width="17.2" height="12.2" rx="0.8"/>
<path d="M124,14.6 l8.2,6.8 l8.2,-6.8 M124,25.8 l6,-6 M140.4,25.8 l-6,-6" stroke-width="1.1"/>
<circle cx="167.6" cy="18.6" r="6.4" stroke-width="1.5"/>
<path d="M172.4,23.6 l5.8,5.8" stroke-width="2.1" stroke-linecap="round"/>
</g>
<g fill="#6b6b6b"><circle cx="165" cy="18.8" r="0.8"/><circle cx="167.6" cy="18.8" r="0.8"/><circle cx="170.2" cy="18.8" r="0.8"/></g>
<g fill="none" stroke="#6b6b6b" stroke-width="1.5" stroke-linecap="round" stroke-linejoin="round">
<circle cx="451.4" cy="20.5" r="8.6"/><path d="M451.4,25.4 v-9.4 M447.8,19.2 l3.6,-3.6 l3.6,3.6"/>
<circle cx="488.2" cy="20.5" r="8.6"/><path d="M488.2,15.6 v9.4 M484.6,21.8 l3.6,3.6 l3.6,-3.6"/>
<circle cx="701" cy="20.5" r="8.6"/><path d="M696.4,20.5 h9.2"/>
<circle cx="738.2" cy="20.5" r="8.6"/><path d="M733.6,20.5 h9.2 M738.2,15.9 v9.2"/>
</g>
<g font-family="Liberation Sans,sans-serif" font-size="9.6" fill="#555">
<text x="522" y="24" textLength="21.4" lengthAdjust="spacingAndGlyphs">7340</text>
<text x="554.5" y="24" textLength="28.5" lengthAdjust="spacingAndGlyphs">/ 8276</text>
<text x="772" y="24" textLength="25.4" lengthAdjust="spacingAndGlyphs">81.1%</text>
</g>
<path d="M516,30.7 h32.7 M765.7,30.5 h58.3" stroke="#c9c9c9" stroke-width="1" fill="none"/>
<path d="M600.6,9 v22 M925,9 v22" stroke="#d6d6d6" stroke-width="1" fill="none"/>
<path d="M811.4,19 h6.4 l-3.2,3.6 z M863,18.2 h5.6 l-2.8,3.2 z" fill="#6a6a6a"/>
<path d="M623.6,11.8 v14.6 l3.4,-3.2 l2.4,5.2 l2.2,-1 l-2.4,-5 h4.6 z" fill="#2b6fc0"/>
<g fill="none" stroke="#6b6b6b" stroke-width="1.15" stroke-linejoin="round" stroke-linecap="round" transform="translate(664.6,20.2) scale(1.2) translate(-664.2,-20)">
<path d="M659.6,22.4 l-2.6,-3.2 q-1.2,-1.6 0.2,-2.4 q1.2,-0.6 2.4,0.8 l1.8,2 v-6.2 q0,-1.3 1.1,-1.3 q1.1,0 1.1,1.3 v-1.4 q0,-1.3 1.15,-1.3 q1.15,0 1.15,1.3 v1 q0,-1.2 1.1,-1.2 q1.1,0 1.1,1.2 v1.6 q0,-1.1 1.05,-1.1 q1.05,0 1.05,1.2 v7.5 q0,5.6 -5.2,5.6 h-1.4 q-3,0 -5,-3.4 z"/>
<path d="M663.6,14 v5 M665.9,13 v6 M668.1,14 v5" stroke-width="1"/>
</g>
<g fill="none" stroke="#2a6a9c" stroke-width="1.7">
<path d="M844.8,10 v7.2 h13 v-7.2"/>
<path d="M845.6,29.6 v-9 h7.4 l4,4 v5" stroke-width="1.5"/>
<path d="M852.6,20.6 v4.4 h4.4" stroke-width="1.2"/>
<path d="M848,27.4 h6.4 M849.6,25.6 l-1.8,1.8 l1.8,1.8" stroke-width="1.1"/>
</g>
<g fill="none" stroke="#6b6b6b" stroke-width="1.5" stroke-linejoin="round" stroke-linecap="round">
<rect x="890" y="12.6" width="17.4" height="6.2" rx="0.8"/>
<path d="M898.7,20.4 v8.2 M895,25.2 l3.7,3.8 l3.7,-3.8"/>
</g>
<g fill="#6b6b6b"><rect x="892.4" y="14.8" width="2" height="1.8"/><rect x="896" y="14.8" width="2" height="1.8"/><rect x="899.6" y="14.8" width="2" height="1.8"/><rect x="903.2" y="14.8" width="2" height="1.8"/></g>
<path d="M945.6,12.8 h15 v11.6 h-7.6 l-3.4,4 v-4 h-4 z" fill="#e6e6e6" stroke="#6b6b6b" stroke-width="1.3" stroke-linejoin="round"/>
<path d="M948.4,16.6 h9.4" stroke="#6b6b6b" stroke-width="1.2"/>
<path d="M981.4,28.2 l2.2,-3.2 l1.6,-3 l9.6,-9.6 q1.4,-1 2.6,0.2 q1,1.2 0,2.6 l-9.8,9.6 l-3,1.4 z" fill="#e6e6e6" stroke="#6b6b6b" stroke-width="1.3" stroke-linejoin="round"/>
<path d="M981.4,28.4 l3.4,-0.6 l-2,-2.2 z" fill="#6b6b6b"/>
<rect x="986" y="25.6" width="13" height="3.4" fill="#d9d9d9"/>
<g fill="none" stroke="#6b6b6b" stroke-width="1.3" stroke-linejoin="round" stroke-linecap="round">
<path d="M1018,28.4 l2.2,-8.4 l5.4,-3.4 l4.4,4.4 l-3.4,5.4 z M1018.4,28 l4.6,-4.6 M1025.2,16.2 l3.2,-3.6 q0.8,-0.8 1.6,0 l2.4,2.4 M1029.8,21.2 l3.6,-3.4"/>
<circle cx="1023.6" cy="22.8" r="1.1"/>
<path d="M1029,28.2 q1.2,-2.6 2,-0.6 q0.8,1.4 1.6,-0.4 q0.8,-1.2 1.4,0.6 l1.4,-0.4" stroke-width="1.1"/>
</g>
<g fill="none" stroke="#6b6b6b" stroke-width="1.5" stroke-linejoin="round">
<path d="M1057.4,18 v-5.4 h8.6 l4.6,4.6 v2 M1066,12.6 v4.6 h4.6 M1057.4,22.4 v5.6 h8"/>
<path d="M1066,28.4 l1,-3.4 l6.4,-6.4 l2.4,2.4 l-6.4,6.4 z" stroke-width="1.2"/>
</g>
<rect x="1054.2" y="16.4" width="6.6" height="5" fill="#6b6b6b"/>
<text x="14" y="61.2" font-family="Liberation Sans,Noto Sans CJK JP,sans-serif" font-size="12.4" fill="#4a4a4a" textLength="26" lengthAdjust="spacingAndGlyphs">しおり</text>
<g fill="none" stroke="#555" stroke-width="1.5" stroke-linecap="round">
<path d="M173.6,52.6 l8.8,8.8 M182.4,52.6 l-8.8,8.8" stroke-width="1.7" stroke-linecap="butt"/>
</g>
<rect x="14.9" y="87.2" width="15.4" height="12" rx="1" fill="none" stroke="#5a5a5a" stroke-width="1.7"/>
<g fill="#5a5a5a"><rect x="18" y="90.2" width="2.2" height="2"/><rect x="18" y="94.4" width="2.2" height="2"/><rect x="21.8" y="90.4" width="5.6" height="1.7"/><rect x="21.8" y="94.6" width="5.6" height="1.7"/>
<path d="M36,91.8 h5.4 l-2.7,3 z"/></g>
<g fill="none" stroke="#5a5a5a" stroke-width="1.6" stroke-linejoin="miter">
<path d="M60.6,100 v-16 h10.6 v9"/><path d="M60.6,100 l4.8,-4.2 l2,1.6"/>
<path d="M63.2,89.4 h5.4 M64.2,87.6 l-1.6,1.8 l1.6,1.8 M67.6,87.6 l1.6,1.8 l-1.6,1.8" stroke-width="1.2"/>
</g>
<path d="M69.4,92.6 v9 l2.2,-2 l1.6,2.8 l1.4,-0.8 l-1.6,-2.6 h3.4 z" fill="#4a4a4a"/>
<path d="M11.6,129.2 l4.2,4.4 l4.2,-4.4" fill="none" stroke="#555" stroke-width="1.4"/>
<path d="M29.3,124 h8.6 v14 l-4.3,-3.6 l-4.3,3.6 z" fill="#dcdcdc" stroke="#5a5a5a" stroke-width="1.4" stroke-linejoin="miter"/>
<g transform="translate(0,0.0)">
<path d="M27.6,154 l3.6,4.2 l-3.6,4.2" fill="none" stroke="#555" stroke-width="1.3"/>
<path d="M43,165.2 v-14 h7.2 v4.4 M43,165.4 l2.8,-2.6" fill="none" stroke="#555" stroke-width="1.9"/>
<path d="M44.2,152 h4.8 v3 h-2 v8 l-1.4,1.2 h-1.4 z" fill="#dedede"/>
<g fill="#555"><rect x="47.6" y="156" width="8.2" height="1.8"/><rect x="46.6" y="159.5" width="2.4" height="2"/><rect x="50.4" y="159.5" width="5.4" height="2"/><rect x="46.6" y="163.4" width="2.4" height="2"/><rect x="50.4" y="163.4" width="5.4" height="2"/></g>
</g>
<g transform="translate(0,27.0)">
<path d="M27.6,154 l3.6,4.2 l-3.6,4.2" fill="none" stroke="#555" stroke-width="1.3"/>
<path d="M43,165.2 v-14 h7.2 v4.4 M43,165.4 l2.8,-2.6" fill="none" stroke="#555" stroke-width="1.9"/>
<path d="M44.2,152 h4.8 v3 h-2 v8 l-1.4,1.2 h-1.4 z" fill="#dedede"/>
<g fill="#555"><rect x="47.6" y="156" width="8.2" height="1.8"/><rect x="46.6" y="159.5" width="2.4" height="2"/><rect x="50.4" y="159.5" width="5.4" height="2"/><rect x="46.6" y="163.4" width="2.4" height="2"/><rect x="50.4" y="163.4" width="5.4" height="2"/></g>
</g>
<g transform="translate(0,64.0)">
<path d="M27.6,154 l3.6,4.2 l-3.6,4.2" fill="none" stroke="#555" stroke-width="1.3"/>
<path d="M43,165.2 v-14 h7.2 v4.4 M43,165.4 l2.8,-2.6" fill="none" stroke="#555" stroke-width="1.9"/>
<path d="M44.2,152 h4.8 v3 h-2 v8 l-1.4,1.2 h-1.4 z" fill="#dedede"/>
<g fill="#555"><rect x="47.6" y="156" width="8.2" height="1.8"/><rect x="46.6" y="159.5" width="2.4" height="2"/><rect x="50.4" y="159.5" width="5.4" height="2"/><rect x="46.6" y="163.4" width="2.4" height="2"/><rect x="50.4" y="163.4" width="5.4" height="2"/></g>
</g>
<g transform="translate(0,91.0)">
<path d="M27.6,154 l3.6,4.2 l-3.6,4.2" fill="none" stroke="#555" stroke-width="1.3"/>
<path d="M43,165.2 v-14 h7.2 v4.4 M43,165.4 l2.8,-2.6" fill="none" stroke="#555" stroke-width="1.9"/>
<path d="M44.2,152 h4.8 v3 h-2 v8 l-1.4,1.2 h-1.4 z" fill="#dedede"/>
<g fill="#555"><rect x="47.6" y="156" width="8.2" height="1.8"/><rect x="46.6" y="159.5" width="2.4" height="2"/><rect x="50.4" y="159.5" width="5.4" height="2"/><rect x="46.6" y="163.4" width="2.4" height="2"/><rect x="50.4" y="163.4" width="5.4" height="2"/></g>
</g>
<g transform="translate(0,118.0)">
<path d="M27.6,154 l3.6,4.2 l-3.6,4.2" fill="none" stroke="#555" stroke-width="1.3"/>
<path d="M43,165.2 v-14 h7.2 v4.4 M43,165.4 l2.8,-2.6" fill="none" stroke="#555" stroke-width="1.9"/>
<path d="M44.2,152 h4.8 v3 h-2 v8 l-1.4,1.2 h-1.4 z" fill="#dedede"/>
<g fill="#555"><rect x="47.6" y="156" width="8.2" height="1.8"/><rect x="46.6" y="159.5" width="2.4" height="2"/><rect x="50.4" y="159.5" width="5.4" height="2"/><rect x="46.6" y="163.4" width="2.4" height="2"/><rect x="50.4" y="163.4" width="5.4" height="2"/></g>
</g>
<g transform="translate(0,145.0)">
<path d="M27.6,154 l3.6,4.2 l-3.6,4.2" fill="none" stroke="#555" stroke-width="1.3"/>
<path d="M43,165.2 v-14 h7.2 v4.4 M43,165.4 l2.8,-2.6" fill="none" stroke="#555" stroke-width="1.9"/>
<path d="M44.2,152 h4.8 v3 h-2 v8 l-1.4,1.2 h-1.4 z" fill="#dedede"/>
<g fill="#555"><rect x="47.6" y="156" width="8.2" height="1.8"/><rect x="46.6" y="159.5" width="2.4" height="2"/><rect x="50.4" y="159.5" width="5.4" height="2"/><rect x="46.6" y="163.4" width="2.4" height="2"/><rect x="50.4" y="163.4" width="5.4" height="2"/></g>
</g>
<g transform="translate(0,171.5)">
<path d="M27.6,154 l3.6,4.2 l-3.6,4.2" fill="none" stroke="#555" stroke-width="1.3"/>
<path d="M43,165.2 v-14 h7.2 v4.4 M43,165.4 l2.8,-2.6" fill="none" stroke="#555" stroke-width="1.9"/>
<path d="M44.2,152 h4.8 v3 h-2 v8 l-1.4,1.2 h-1.4 z" fill="#dedede"/>
<g fill="#555"><rect x="47.6" y="156" width="8.2" height="1.8"/><rect x="46.6" y="159.5" width="2.4" height="2"/><rect x="50.4" y="159.5" width="5.4" height="2"/><rect x="46.6" y="163.4" width="2.4" height="2"/><rect x="50.4" y="163.4" width="5.4" height="2"/></g>
</g>
<g transform="translate(0,198.5)">
<path d="M27.6,154 l3.6,4.2 l-3.6,4.2" fill="none" stroke="#555" stroke-width="1.3"/>
<path d="M43,165.2 v-14 h7.2 v4.4 M43,165.4 l2.8,-2.6" fill="none" stroke="#555" stroke-width="1.9"/>
<path d="M44.2,152 h4.8 v3 h-2 v8 l-1.4,1.2 h-1.4 z" fill="#dedede"/>
<g fill="#555"><rect x="47.6" y="156" width="8.2" height="1.8"/><rect x="46.6" y="159.5" width="2.4" height="2"/><rect x="50.4" y="159.5" width="5.4" height="2"/><rect x="46.6" y="163.4" width="2.4" height="2"/><rect x="50.4" y="163.4" width="5.4" height="2"/></g>
</g>
<g transform="translate(0,225.5)">
<path d="M27.6,154 l3.6,4.2 l-3.6,4.2" fill="none" stroke="#555" stroke-width="1.3"/>
<path d="M43,165.2 v-14 h7.2 v4.4 M43,165.4 l2.8,-2.6" fill="none" stroke="#555" stroke-width="1.9"/>
<path d="M44.2,152 h4.8 v3 h-2 v8 l-1.4,1.2 h-1.4 z" fill="#dedede"/>
<g fill="#555"><rect x="47.6" y="156" width="8.2" height="1.8"/><rect x="46.6" y="159.5" width="2.4" height="2"/><rect x="50.4" y="159.5" width="5.4" height="2"/><rect x="46.6" y="163.4" width="2.4" height="2"/><rect x="50.4" y="163.4" width="5.4" height="2"/></g>
</g>
<g transform="translate(0,252.5)">
<path d="M27.6,154 l3.6,4.2 l-3.6,4.2" fill="none" stroke="#555" stroke-width="1.3"/>
<path d="M43,165.2 v-14 h7.2 v4.4 M43,165.4 l2.8,-2.6" fill="none" stroke="#555" stroke-width="1.9"/>
<path d="M44.2,152 h4.8 v3 h-2 v8 l-1.4,1.2 h-1.4 z" fill="#dedede"/>
<g fill="#555"><rect x="47.6" y="156" width="8.2" height="1.8"/><rect x="46.6" y="159.5" width="2.4" height="2"/><rect x="50.4" y="159.5" width="5.4" height="2"/><rect x="46.6" y="163.4" width="2.4" height="2"/><rect x="50.4" y="163.4" width="5.4" height="2"/></g>
</g>
<g transform="translate(0,279.0)">
<path d="M27.6,154 l3.6,4.2 l-3.6,4.2" fill="none" stroke="#555" stroke-width="1.3"/>
<path d="M43,165.2 v-14 h7.2 v4.4 M43,165.4 l2.8,-2.6" fill="none" stroke="#555" stroke-width="1.9"/>
<path d="M44.2,152 h4.8 v3 h-2 v8 l-1.4,1.2 h-1.4 z" fill="#dedede"/>
<g fill="#555"><rect x="47.6" y="156" width="8.2" height="1.8"/><rect x="46.6" y="159.5" width="2.4" height="2"/><rect x="50.4" y="159.5" width="5.4" height="2"/><rect x="46.6" y="163.4" width="2.4" height="2"/><rect x="50.4" y="163.4" width="5.4" height="2"/></g>
</g>
<g transform="translate(0,306.0)">
<path d="M27.6,154 l3.6,4.2 l-3.6,4.2" fill="none" stroke="#555" stroke-width="1.3"/>
<path d="M43,165.2 v-14 h7.2 v4.4 M43,165.4 l2.8,-2.6" fill="none" stroke="#555" stroke-width="1.9"/>
<path d="M44.2,152 h4.8 v3 h-2 v8 l-1.4,1.2 h-1.4 z" fill="#dedede"/>
<g fill="#555"><rect x="47.6" y="156" width="8.2" height="1.8"/><rect x="46.6" y="159.5" width="2.4" height="2"/><rect x="50.4" y="159.5" width="5.4" height="2"/><rect x="46.6" y="163.4" width="2.4" height="2"/><rect x="50.4" y="163.4" width="5.4" height="2"/></g>
</g>
<g transform="translate(0,333.0)">
<path d="M27.6,154 l3.6,4.2 l-3.6,4.2" fill="none" stroke="#555" stroke-width="1.3"/>
<path d="M43,165.2 v-14 h7.2 v4.4 M43,165.4 l2.8,-2.6" fill="none" stroke="#555" stroke-width="1.9"/>
<path d="M44.2,152 h4.8 v3 h-2 v8 l-1.4,1.2 h-1.4 z" fill="#dedede"/>
<g fill="#555"><rect x="47.6" y="156" width="8.2" height="1.8"/><rect x="46.6" y="159.5" width="2.4" height="2"/><rect x="50.4" y="159.5" width="5.4" height="2"/><rect x="46.6" y="163.4" width="2.4" height="2"/><rect x="50.4" y="163.4" width="5.4" height="2"/></g>
</g>
<g transform="translate(0,360.0)">
<path d="M27.6,154 l3.6,4.2 l-3.6,4.2" fill="none" stroke="#555" stroke-width="1.3"/>
<path d="M43,165.2 v-14 h7.2 v4.4 M43,165.4 l2.8,-2.6" fill="none" stroke="#555" stroke-width="1.9"/>
<path d="M44.2,152 h4.8 v3 h-2 v8 l-1.4,1.2 h-1.4 z" fill="#dedede"/>
<g fill="#555"><rect x="47.6" y="156" width="8.2" height="1.8"/><rect x="46.6" y="159.5" width="2.4" height="2"/><rect x="50.4" y="159.5" width="5.4" height="2"/><rect x="46.6" y="163.4" width="2.4" height="2"/><rect x="50.4" y="163.4" width="5.4" height="2"/></g>
</g>
<g transform="translate(0,386.5)">
<path d="M27.6,154 l3.6,4.2 l-3.6,4.2" fill="none" stroke="#555" stroke-width="1.3"/>
<path d="M43,165.2 v-14 h7.2 v4.4 M43,165.4 l2.8,-2.6" fill="none" stroke="#555" stroke-width="1.9"/>
<path d="M44.2,152 h4.8 v3 h-2 v8 l-1.4,1.2 h-1.4 z" fill="#dedede"/>
<g fill="#555"><rect x="47.6" y="156" width="8.2" height="1.8"/><rect x="46.6" y="159.5" width="2.4" height="2"/><rect x="50.4" y="159.5" width="5.4" height="2"/><rect x="46.6" y="163.4" width="2.4" height="2"/><rect x="50.4" y="163.4" width="5.4" height="2"/></g>
</g>
<g transform="translate(0,413.5)">
<path d="M27.6,154 l3.6,4.2 l-3.6,4.2" fill="none" stroke="#555" stroke-width="1.3"/>
<path d="M43,165.2 v-14 h7.2 v4.4 M43,165.4 l2.8,-2.6" fill="none" stroke="#555" stroke-width="1.9"/>
<path d="M44.2,152 h4.8 v3 h-2 v8 l-1.4,1.2 h-1.4 z" fill="#dedede"/>
<g fill="#555"><rect x="47.6" y="156" width="8.2" height="1.8"/><rect x="46.6" y="159.5" width="2.4" height="2"/><rect x="50.4" y="159.5" width="5.4" height="2"/><rect x="46.6" y="163.4" width="2.4" height="2"/><rect x="50.4" y="163.4" width="5.4" height="2"/></g>
</g>
<g transform="translate(0,440.5)">
<path d="M27.6,154 l3.6,4.2 l-3.6,4.2" fill="none" stroke="#555" stroke-width="1.3"/>
<path d="M43,165.2 v-14 h7.2 v4.4 M43,165.4 l2.8,-2.6" fill="none" stroke="#555" stroke-width="1.9"/>
<path d="M44.2,152 h4.8 v3 h-2 v8 l-1.4,1.2 h-1.4 z" fill="#dedede"/>
<g fill="#555"><rect x="47.6" y="156" width="8.2" height="1.8"/><rect x="46.6" y="159.5" width="2.4" height="2"/><rect x="50.4" y="159.5" width="5.4" height="2"/><rect x="46.6" y="163.4" width="2.4" height="2"/><rect x="50.4" y="163.4" width="5.4" height="2"/></g>
</g>
<g transform="translate(0,467.0)">
<path d="M27.6,154 l3.6,4.2 l-3.6,4.2" fill="none" stroke="#555" stroke-width="1.3"/>
<path d="M43,165.2 v-14 h7.2 v4.4 M43,165.4 l2.8,-2.6" fill="none" stroke="#555" stroke-width="1.9"/>
<path d="M44.2,152 h4.8 v3 h-2 v8 l-1.4,1.2 h-1.4 z" fill="#dedede"/>
<g fill="#555"><rect x="47.6" y="156" width="8.2" height="1.8"/><rect x="46.6" y="159.5" width="2.4" height="2"/><rect x="50.4" y="159.5" width="5.4" height="2"/><rect x="46.6" y="163.4" width="2.4" height="2"/><rect x="50.4" y="163.4" width="5.4" height="2"/></g>
</g>
<path d="M212.6,419.2 v8 l-4.4,-4 z" fill="#555"/>
<path d="M393.6,48.4 l7,7 M400.6,48.4 l-7,7" stroke="#8c8c8c" stroke-width="1.6" fill="none"/>
<g transform="translate(394.4,74.6)" fill="#666"><rect x="-1.2" y="-5.4" width="2.4" height="3" transform="rotate(0)"/><rect x="-1.2" y="-5.4" width="2.4" height="3" transform="rotate(45)"/><rect x="-1.2" y="-5.4" width="2.4" height="3" transform="rotate(90)"/><rect x="-1.2" y="-5.4" width="2.4" height="3" transform="rotate(135)"/><rect x="-1.2" y="-5.4" width="2.4" height="3" transform="rotate(180)"/><rect x="-1.2" y="-5.4" width="2.4" height="3" transform="rotate(225)"/><rect x="-1.2" y="-5.4" width="2.4" height="3" transform="rotate(270)"/><rect x="-1.2" y="-5.4" width="2.4" height="3" transform="rotate(315)"/><circle r="4.1"/><circle r="1.6" fill="#fff"/></g>
</svg>
</body></html>
